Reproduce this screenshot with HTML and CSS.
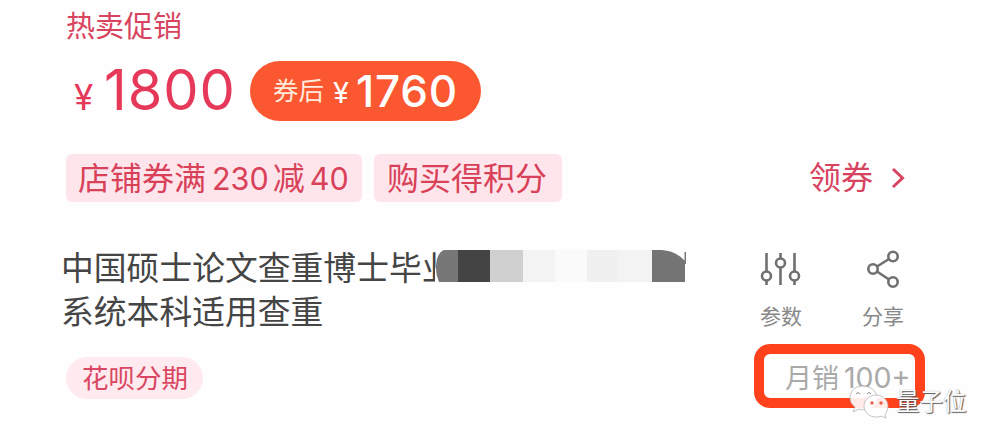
FILE: index.html
```html
<!DOCTYPE html>
<html lang="zh-CN">
<head>
    <meta charset="UTF-8">
    <meta name="viewport" content="width=device-width, initial-scale=1.0">
    <title>商品详情</title>
    <link rel="stylesheet" href="styles.css">
</head>
<body>
    <div class="product">
        <div class="promo-label">热卖促销</div>

        <div class="price-row">
            <div class="price"><span class="yen">¥</span><span class="amount">1800</span></div>
            <div class="coupon-price">
                <span class="coupon-label">券后</span>
                <span class="coupon-yen">¥</span>
                <span class="coupon-amount">1760</span>
            </div>
        </div>

        <div class="coupon-row">
            <div class="tag tag-shop">店铺券满<span class="num num-230">230</span>减<span class="num num-40">40</span></div>
            <div class="tag tag-points">购买得积分</div>
            <a class="get-coupon" href="#">
                <span>领券</span>
                <svg class="chevron" viewBox="0 0 14 22"><path d="M2 2l9.5 9L2 20"/></svg>
            </a>
        </div>

        <div class="title-row">
            <h1 class="title">
                <span class="title-line">中国硕士论文查重博士毕业<svg class="mosaic" viewBox="0 0 252 34">
                    <path fill="#fefefe" d="M8 0h244v34H0V20z"/>
                    <path fill="#777" d="M9 1h14v32H4Q-1 22 2 10Q4 3 9 1z"/>
                    <path fill="#444" d="M23 1h32v32H23z"/>
                    <path fill="#d0d0d0" d="M55 1h33v32H55z"/>
                    <path fill="#f3f3f3" d="M88 1h32v32H88z"/>
                    <path fill="#fafafa" d="M120 1h32v32h-32z"/>
                    <path fill="#f0f0f0" d="M152 1h32v32h-32z"/>
                    <path fill="#f3f3f3" d="M184 1h33v32h-33z"/>
                    <path fill="#747474" d="M217 1h10q14 1 23 11v21h-33z"/>
                    <path fill="#777" d="M249.500 3h1.500v12h-1.500z"/>
                </svg></span>
                <span class="title-line">系统本科适用查重</span>
            </h1>
            <div class="action">
                <svg class="icon" viewBox="0 0 42 40">
                    <path d="M6.500 3v18.500M6.500 30.500V35M20.500 3v5M20.500 18v17M34.500 3v18.500M34.500 30.500V35"/>
                    <circle cx="6.500" cy="26" r="4.500"/>
                    <circle cx="20.500" cy="13" r="4.500"/>
                    <circle cx="34.500" cy="26" r="4.500"/>
                </svg>
                <span>参数</span>
            </div>
            <div class="action">
                <svg class="icon" viewBox="0 0 42 40">
                    <path d="M15 16.500l12-7.500M15 21.500l12 8"/>
                    <circle cx="11" cy="19" r="4.700"/>
                    <circle cx="31" cy="6.500" r="4.700"/>
                    <circle cx="31" cy="32" r="4.700"/>
                </svg>
                <span>分享</span>
            </div>
        </div>

        <div class="bottom-row">
            <div class="installment">花呗分期</div>
            <div class="sales">月销<span class="sales-num">100+</span></div>
        </div>
    </div>

    <div class="watermark">
        <svg class="wechat" viewBox="0 0 42 36">
            <g class="bubble">
                <path d="M14 2C6 2 1 7 1 14c0 4 2 7 5 9l-2 5 6-3c10 3 18-3 18-11C28 7 21 2 14 2z"/>
                <path d="M27 11c-7 0-12 5-12 11s5 11 12 11c2 0 4 0 5-1l5 2-1-4c2-2 3-5 3-8 0-6-5-11-12-11z"/>
            </g>
            <path class="smile" d="M7 10q2-3 4 0M18 10q2-3 4 0"/>
            <circle class="eye" cx="23" cy="19" r="1.700"/>
            <circle class="eye" cx="32" cy="19" r="1.700"/>
        </svg>
        <span>量子位</span>
    </div>
</body>
</html>
```
FILE: styles.css
```css
* {
    margin: 0;
    padding: 0;
    box-sizing: border-box;
}

body {
    width: 1000px;
    height: 446px;
    overflow: hidden;
    background: #fefefe;
    font-family: Inter, "Noto Sans CJK SC", sans-serif;
    color: #444;
}

.product {
    padding: 8px 75px 0 66px;
}

.promo-label {
    height: 36px;
    line-height: 37px;
    font-size: 29px;
    color: #d84360;
}

.price-row {
    display: flex;
    align-items: center;
    height: 60px;
    margin-top: 17px;
}

.price {
    display: flex;
    align-items: baseline;
    width: 184px;
    padding: 5px 0 0 8px;
    line-height: 60px;
    color: #e6395a;
}

.yen {
    width: 30px;
    font-size: 35px;
}

.amount {
    font-size: 56px;
    letter-spacing: 0.9px;
}

.coupon-price {
    display: flex;
    align-items: center;
    width: 231px;
    height: 60px;
    padding-left: 23px;
    line-height: 60px;
    border-radius: 30px;
    background: #fb5831;
    color: #fff;
}

.coupon-label {
    width: 60px;
    font-size: 25.5px;
    color: #ffeadc;
}

.coupon-yen {
    width: 23px;
    padding-top: 4px;
    font-size: 29px;
}

.coupon-amount {
    font-size: 44px;
    font-weight: 500;
    letter-spacing: 0.8px;
}

.coupon-row {
    display: flex;
    align-items: center;
    gap: 12px;
    height: 48px;
    margin-top: 33px;
}

.tag {
    height: 48px;
    line-height: 49px;
    border-radius: 6px;
    background: #fee5ec;
    font-size: 32px;
    color: #d84158;
    white-space: nowrap;
}

.tag-shop {
    width: 296px;
    padding-left: 12px;
}

.tag-points {
    width: 188px;
    padding-left: 13px;
}

.num {
    font-size: 30.5px;
}

.num-230 {
    margin: 0 4px 0 6px;
}

.num-40 {
    margin-left: 5px;
}

.get-coupon {
    display: flex;
    align-items: center;
    gap: 18px;
    margin-left: auto;
    margin-right: 20px;
    font-size: 32px;
    line-height: 50px;
    text-decoration: none;
    color: #d84360;
}

.chevron {
    width: 14px;
    height: 22px;
    fill: none;
    stroke: #d84360;
    stroke-width: 3;
}

.title-row {
    display: flex;
    height: 88px;
    margin-top: 44px;
    margin-left: -5px;
}

.title {
    flex: none;
    width: 694px;
    font-size: 32.8px;
    font-weight: 400;
    line-height: 44px;
    color: #454545;
}

.title-line {
    display: flex;
    align-items: center;
    height: 44px;
    white-space: nowrap;
}

.mosaic {
    flex: none;
    width: 252px;
    height: 34px;
    margin-left: -20px;
    margin-top: -4px;
}

.action {
    display: flex;
    flex-direction: column;
    align-items: center;
    width: 52px;
    margin-right: 50px;
    flex: none;
    font-size: 21px;
    line-height: 30px;
    color: #888;
}

.icon {
    width: 42px;
    height: 40px;
    margin: 4px 0 12px;
    fill: none;
    stroke: #707070;
    stroke-width: 2.6;
}

.bottom-row {
    display: flex;
    justify-content: space-between;
    margin-top: 10px;
}

.installment {
    width: 137px;
    height: 42px;
    margin-top: 13px;
    padding-left: 16px;
    border-radius: 21px;
    background: #ffebef;
    font-size: 26.5px;
    line-height: 42px;
    color: #d94762;
}

.sales {
    width: 171px;
    height: 64px;
    padding-left: 21px;
    border: 10px solid #ff421c;
    border-radius: 16px;
    font-size: 27px;
    line-height: 48px;
    color: #aaa;
    white-space: nowrap;
}

.sales-num {
    margin-left: 5px;
    font-size: 28.5px;
}

/* account watermark laid over the corner of the page */
.watermark {
    position: absolute;
    left: 849px;
    top: 383px;
    display: flex;
    align-items: center;
    gap: 5px;
    font-size: 23.5px;
    line-height: 38px;
    color: #fff;
    text-shadow: 1px 1px 1px #555, 0 0 1px #888;
}

.wechat {
    width: 42px;
    height: 36px;
}

.bubble {
    fill: rgba(255, 255, 255, 0.9);
    stroke: #aaa;
    stroke-width: 0.7;
}

.smile {
    fill: none;
    stroke: #888;
}

.eye {
    fill: #ef5c48;
}
```
